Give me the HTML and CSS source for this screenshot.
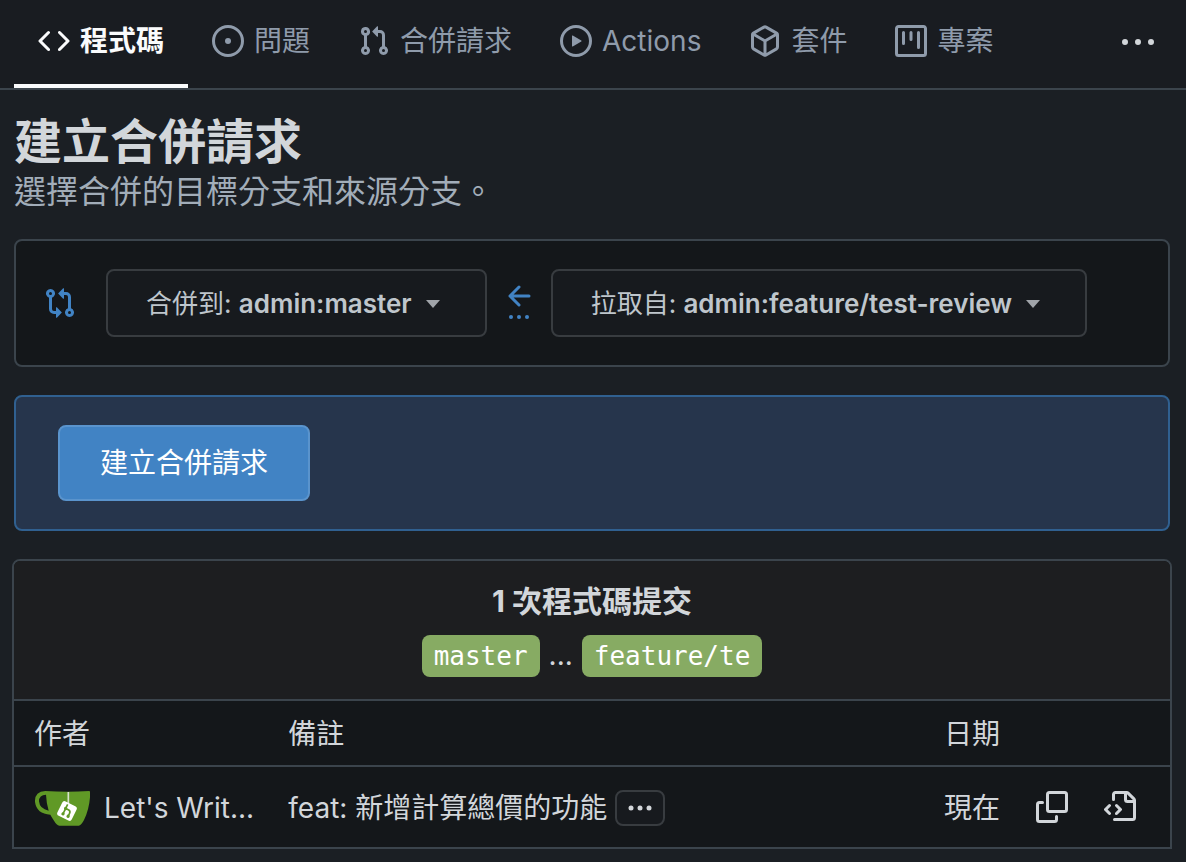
FILE: index.html
```
<!DOCTYPE html>
<html lang="zh-TW">
<head>
    <meta charset="UTF-8">
    <meta name="viewport" content="width=device-width, initial-scale=1.0">
    <title>建立合併請求</title>
    <link rel="stylesheet" href="styles.css">
</head>
<body>

<nav class="repo-nav">
    <a class="tab active" href="#">
        <svg class="icon" viewBox="0 0 16 16"><path d="m11.28 3.22 4.25 4.25a.75.75 0 0 1 0 1.06l-4.25 4.25a.749.749 0 0 1-1.275-.326.75.75 0 0 1 .215-.734L13.94 8l-3.72-3.72a.749.749 0 0 1 .326-1.275.75.75 0 0 1 .734.215m-6.56 0a.75.75 0 0 1 1.042.018.75.75 0 0 1 .018 1.042L2.06 8l3.72 3.72a.749.749 0 0 1-.326 1.275.75.75 0 0 1-.734-.215L.47 8.53a.75.75 0 0 1 0-1.06Z"/></svg>
        程式碼
    </a>
    <a class="tab" href="#">
        <svg class="icon" viewBox="0 0 16 16"><path d="M8 9.5a1.5 1.5 0 1 0 0-3 1.5 1.5 0 0 0 0 3"/><path d="M8 0a8 8 0 1 1 0 16A8 8 0 0 1 8 0M1.5 8a6.5 6.5 0 1 0 13 0 6.5 6.5 0 0 0-13 0"/></svg>
        問題
    </a>
    <a class="tab" href="#">
        <svg class="icon" viewBox="0 0 16 16"><path d="M1.5 3.25a2.25 2.25 0 1 1 3 2.122v5.256a2.251 2.251 0 1 1-1.5 0V5.372A2.25 2.25 0 0 1 1.5 3.25m5.677-.177L9.573.677A.25.25 0 0 1 10 .854V2.5h1A2.5 2.5 0 0 1 13.5 5v5.628a2.251 2.251 0 1 1-1.5 0V5a1 1 0 0 0-1-1h-1v1.646a.25.25 0 0 1-.427.177L7.177 3.427a.25.25 0 0 1 0-.354M3.75 2.5a.75.75 0 1 0 0 1.5.75.75 0 0 0 0-1.5m0 9.5a.75.75 0 1 0 0 1.5.75.75 0 0 0 0-1.5m8.25.75a.75.75 0 1 0 1.5 0 .75.75 0 0 0-1.5 0"/></svg>
        合併請求
    </a>
    <a class="tab" href="#">
        <svg class="icon" viewBox="0 0 16 16"><path d="M8 0a8 8 0 1 1 0 16A8 8 0 0 1 8 0M1.5 8a6.5 6.5 0 1 0 13 0 6.5 6.5 0 0 0-13 0m4.879-2.773 4.264 2.559a.25.25 0 0 1 0 .428l-4.264 2.559A.25.25 0 0 1 6 10.559V5.442a.25.25 0 0 1 .379-.215"/></svg>
        Actions
    </a>
    <a class="tab" href="#">
        <svg class="icon" viewBox="0 0 16 16"><path d="m8.878.392 5.25 3.045c.54.314.872.89.872 1.514v6.098a1.75 1.75 0 0 1-.872 1.514l-5.25 3.045a1.75 1.75 0 0 1-1.756 0l-5.25-3.045A1.75 1.75 0 0 1 1 11.049V4.951c0-.624.332-1.201.872-1.514L7.122.392a1.75 1.75 0 0 1 1.756 0M7.875 1.69l-4.63 2.685L8 7.133l4.755-2.758-4.63-2.685a.25.25 0 0 0-.25 0M2.5 5.677v5.372c0 .09.047.171.125.216l4.625 2.683V8.432Zm6.25 8.271 4.625-2.683a.25.25 0 0 0 .125-.216V5.677L8.75 8.432Z"/></svg>
        套件
    </a>
    <a class="tab" href="#">
        <svg class="icon" viewBox="0 0 16 16"><path d="M1.75 0h12.5C15.216 0 16 .784 16 1.75v12.5A1.75 1.75 0 0 1 14.25 16H1.75A1.75 1.75 0 0 1 0 14.25V1.75C0 .784.784 0 1.75 0M1.5 1.75v12.5c0 .138.112.25.25.25h12.5a.25.25 0 0 0 .25-.25V1.75a.25.25 0 0 0-.25-.25H1.75a.25.25 0 0 0-.25.25M11.75 3a.75.75 0 0 1 .75.75v7.5a.75.75 0 0 1-1.5 0v-7.5a.75.75 0 0 1 .75-.75m-8.25.75a.75.75 0 0 1 1.5 0v5.5a.75.75 0 0 1-1.5 0ZM8 3a.75.75 0 0 1 .75.75v3.5a.75.75 0 0 1-1.5 0v-3.5A.75.75 0 0 1 8 3"/></svg>
        專案
    </a>
    <button class="nav-more" type="button" aria-label="更多">
        <svg class="icon" viewBox="0 0 16 16"><path d="M0 8a1.5 1.5 0 1 1 3 0 1.5 1.5 0 0 1-3 0m6.5 0a1.5 1.5 0 1 1 3 0 1.5 1.5 0 0 1-3 0M13 8a1.5 1.5 0 1 1 3 0 1.5 1.5 0 0 1-3 0"/></svg>
    </button>
</nav>

<main>
    <header class="page-header">
        <h1>建立合併請求</h1>
        <p>選擇合併的目標分支和來源分支。</p>
    </header>

    <section class="branch-select">
        <svg class="icon compare-icon" viewBox="0 0 16 16"><path d="M9.573.677A.25.25 0 0 1 10 .854V2.5h1A2.5 2.5 0 0 1 13.5 5v5.628a2.251 2.251 0 1 1-1.5 0V5a1 1 0 0 0-1-1h-1v1.646a.25.25 0 0 1-.427.177L7.177 3.427a.25.25 0 0 1 0-.354ZM6 12v-1.646a.25.25 0 0 1 .427-.177l2.396 2.396a.25.25 0 0 1 0 .354l-2.396 2.396A.25.25 0 0 1 6 15.146V13.5H5A2.5 2.5 0 0 1 2.5 11V5.372a2.25 2.25 0 1 1 1.5 0V11a1 1 0 0 0 1 1ZM4 3.25a.75.75 0 1 0-1.5 0 .75.75 0 0 0 1.5 0M12.75 12a.75.75 0 1 0 0 1.5.75.75 0 0 0 0-1.5"/></svg>
        <button class="dropdown" type="button" aria-haspopup="listbox">
            <span>合併到: <strong>admin:master</strong></span>
            <svg class="caret" viewBox="0 0 14 8"><path d="M0 0h14L7 8z"/></svg>
        </button>
        <a class="swap" href="#" aria-label="交換分支">
            <svg viewBox="0 0 24 36"><path d="M12 2 3 11l9 9M3 11h19" fill="none" stroke="currentColor" stroke-width="3" stroke-linecap="round" stroke-linejoin="round"/><circle cx="4" cy="32" r="2"/><circle cx="12" cy="32" r="2"/><circle cx="20" cy="32" r="2"/></svg>
        </a>
        <button class="dropdown" type="button" aria-haspopup="listbox">
            <span>拉取自: <strong>admin:feature/test-review</strong></span>
            <svg class="caret" viewBox="0 0 14 8"><path d="M0 0h14L7 8z"/></svg>
        </button>
    </section>

    <section class="create-box">
        <button class="primary" type="button">建立合併請求</button>
    </section>

    <section class="commits">
        <div class="commits-header">
            <h2>1 次程式碼提交</h2>
            <div class="compare">
                <a class="label" href="#">master</a>
                <span>...</span>
                <a class="label" href="#">feature/te</a>
            </div>
        </div>
        <table>
            <thead>
                <tr>
                    <th class="author">作者</th>
                    <th>備註</th>
                    <th class="date">日期</th>
                    <th class="actions"></th>
                </tr>
            </thead>
            <tbody>
                <tr>
                    <td class="author">
                        <div class="author-name">
                            <svg class="avatar" viewBox="0 0 168 108">
                                <path fill="#609926" fill-rule="evenodd" d="M34 3Q100 8 166 3Q170 5 168 22Q165 60 150 90Q142 106 134 107H76Q68 106 60 92Q52 80 49 74Q8 72 3 36Q1 5 34 3M36 14Q15 14 15 34Q17 57 44 62Q37 38 36 14"/>
                                <path stroke="#d8e4cc" stroke-width="5" d="M103 6v34"/>
                                <g transform="rotate(26 99 63)">
                                    <rect x="75" y="39" width="48" height="48" rx="8" fill="#fff"/>
                                    <path d="M92 44v32M92 58h9q8 0 8 8v10" fill="none" stroke="#609926" stroke-width="5"/>
                                    <g fill="#609926">
                                        <circle cx="92" cy="58" r="5"/><circle cx="92" cy="76" r="5"/><circle cx="109" cy="76" r="5"/>
                                    </g>
                                </g>
                            </svg>
                            <span>Let's Writ...</span>
                        </div>
                    </td>
                    <td>
                        <div class="message">
                            <span>feat: 新增計算總價的功能</span>
                            <button class="ellipsis" type="button" aria-label="顯示完整訊息">
                                <svg viewBox="0 0 24 6"><circle cx="3" cy="3" r="2.5"/><circle cx="12" cy="3" r="2.5"/><circle cx="21" cy="3" r="2.5"/></svg>
                            </button>
                        </div>
                    </td>
                    <td class="date">現在</td>
                    <td class="actions">
                        <div class="row-buttons">
                            <button type="button" aria-label="複製">
                                <svg class="icon" viewBox="0 0 16 16"><g fill="none" stroke="currentColor" stroke-width="1.5" stroke-linecap="round"><rect x="5.75" y=".75" width="9.5" height="9.5" rx="1"/><path d="M3.25 5.75h-1.5a1 1 0 0 0-1 1v7.5a1 1 0 0 0 1 1h7.5a1 1 0 0 0 1-1v-1.5"/></g></svg>
                            </button>
                            <a href="#" aria-label="檢視檔案">
                                <svg class="icon" viewBox="0 0 16 16"><path d="M4 1.75C4 .784 4.784 0 5.75 0h5.586c.464 0 .909.184 1.237.513l2.914 2.914c.329.328.513.773.513 1.237v8.586A1.75 1.75 0 0 1 14.25 15h-9a.75.75 0 0 1 0-1.5h9a.25.25 0 0 0 .25-.25V6h-2.75A1.75 1.75 0 0 1 10 4.25V1.5H5.75a.25.25 0 0 0-.25.25v2.5a.75.75 0 0 1-1.5 0Zm1.72 4.97a.75.75 0 0 1 1.06 0l2 2a.75.75 0 0 1 0 1.06l-2 2a.749.749 0 0 1-1.275-.326.75.75 0 0 1 .215-.734l1.47-1.47-1.47-1.47a.75.75 0 0 1 0-1.06M3.28 7.78 1.81 9.25l1.47 1.47a.75.75 0 0 1-.018 1.042.75.75 0 0 1-1.042.018l-2-2a.75.75 0 0 1 0-1.06l2-2a.75.75 0 0 1 1.042.018.75.75 0 0 1 .018 1.042m8.22-6.218V4.25c0 .138.112.25.25.25h2.688l-.011-.013-2.914-2.914-.013-.011Z"/></svg>
                            </a>
                        </div>
                    </td>
                </tr>
            </tbody>
        </table>
    </section>
</main>

</body>
</html>
```
FILE: styles.css
```
* {
    box-sizing: border-box;
}
body {
    margin: 0;
    background-color: #1b1f24;
    color: #d2d6da;
    font-family: Inter, "Noto Sans CJK TC", sans-serif;
    font-size: 28px;
    line-height: 40px;
}
a {
    color: inherit;
    text-decoration: none;
}
button {
    font: inherit;
    color: inherit;
    background: none;
    border: 0;
    padding: 0;
    cursor: pointer;
}
svg {
    display: block;
    flex-shrink: 0;
    fill: currentColor;
}
.icon {
    width: 32px;
    height: 32px;
}
.repo-nav {
    display: flex;
    height: 90px;
    padding: 0 14px;
    background-color: #191c21;
    border-bottom: 2px solid #3b444c;
}
.tab {
    display: flex;
    align-items: center;
    gap: 10px;
    padding: 0 24px 2px;
    border-bottom: 4px solid transparent;
    color: #8f9bab;
    white-space: nowrap;
}
.tab.active {
    color: #fafbfc;
    font-weight: 700;
    border-bottom-color: #fafbfc;
}
.nav-more {
    margin-left: auto;
    padding: 0 18px 4px;
}
main {
    padding: 24px 16px 0 14px;
}
.page-header {
    margin-bottom: 25px;
}
h1 {
    margin: 0;
    font-size: 48px;
    line-height: 56px;
}
.page-header p {
    margin: 0;
    font-size: 32px;
    line-height: 44px;
    color: #a2adb9;
}
.branch-select {
    display: flex;
    align-items: center;
    margin-bottom: 28px;
    padding: 28px;
    background-color: #14171a;
    border: 2px solid #3b444c;
    border-radius: 8px;
}
.compare-icon {
    margin-right: 30px;
    color: #4183c4;
}
.dropdown {
    display: flex;
    align-items: center;
    gap: 14px;
    height: 68px;
    padding: 2px 45px 0 38px;
    background-color: #171a1e;
    border: 2px solid #383c40;
    border-radius: 8px;
    color: #bfc6cc;
    font-size: 26px;
    white-space: nowrap;
}
.dropdown strong {
    font-weight: 600;
}
.caret {
    width: 14px;
    height: 8px;
    color: #a0a4a9;
}
.swap {
    padding: 0 20px;
    color: #4183c4;
}
.swap svg {
    width: 24px;
    height: 36px;
}
.create-box {
    display: flex;
    margin-bottom: 28px;
    padding: 28px 42px;
    background-color: #26354c;
    border: 2px solid #306090;
    border-radius: 8px;
}
.primary {
    height: 76px;
    padding: 0 40px;
    background-color: #4183c4;
    border: 2px solid #5a94cd;
    border-radius: 8px;
    color: #fff;
}
.commits {
    margin: 0 -2px;
    border: 2px solid #3b444c;
    border-radius: 8px 8px 0 0;
    background-color: #14171a;
}
.commits-header {
    padding: 20px 20px 22px;
    background-color: #1d1e20;
    border-bottom: 2px solid #3b444c;
    border-radius: 6px 6px 0 0;
    text-align: center;
}
h2 {
    margin: 0 0 14px;
    font-size: 30px;
    line-height: 40px;
}
.compare {
    display: flex;
    justify-content: center;
    gap: 9px;
}
.label {
    padding: 0 12px;
    background-color: #87ab63;
    border-radius: 8px;
    color: #fff;
    font-family: "DejaVu Sans Mono", monospace;
    font-size: 26px;
    line-height: 42px;
}
table {
    width: 100%;
    table-layout: fixed;
    border-collapse: collapse;
}
th, td {
    padding: 2px 20px 0;
    text-align: left;
    font-weight: 400;
    white-space: nowrap;
}
th {
    height: 65px;
    border-bottom: 2px solid #3b444c;
}
td {
    height: 81px;
}
.author {
    width: 22%;
}
.date {
    width: 110px;
    text-align: right;
}
.actions {
    width: 150px;
    padding: 0 34px 0 16px;
}
.author-name, .message {
    display: flex;
    align-items: center;
}
.author-name {
    gap: 14px;
}
.message {
    gap: 8px;
}
.avatar {
    width: 56px;
    height: 36px;
}
.ellipsis {
    display: flex;
    align-items: center;
    justify-content: center;
    width: 50px;
    height: 36px;
    background-color: #171a1e;
    border: 2px solid #383c40;
    border-radius: 8px;
}
.ellipsis svg {
    width: 24px;
    height: 6px;
}
.row-buttons {
    display: flex;
    justify-content: space-between;
}
```
